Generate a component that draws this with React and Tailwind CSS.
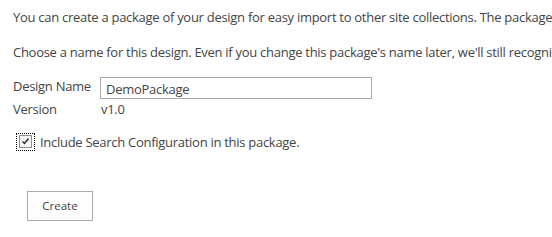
export default function App() {
  return (
    <div className="w-[552px] h-[237px] bg-white overflow-hidden text-[#444] text-[13px] leading-[18px] tracking-[-0.28px] whitespace-nowrap" style={{ fontFamily: '"Open Sans", "Noto Sans", sans-serif' }}>
      <div className="pl-[13px] pt-[8px]">
        <p>You can create a package of your design for easy import to other site collections. The package will be saved</p>
        <p className="mt-[17px]">Choose a name for this design. Even if you change this package's name later, we'll still recognize it as the same design.</p>
        <div className="mt-[16px] flex flex-col">
          <div className="flex items-start h-[22px]">
            <span className="w-[87px]">Design Name</span>
            <div className="w-[272px] h-[22px] border border-[#ababab] flex items-center pl-[5px] pt-[2px]">DemoPackage</div>
          </div>
          <div className="flex items-center h-[18px] mt-[1px]">
            <span className="w-[88px]">Version</span>
            <span>v1.0</span>
          </div>
        </div>
        <div className="mt-[14px] flex items-center">
          <div className="ml-[3px] w-[19px] h-[18px] border border-dotted border-black flex items-center justify-center">
            <div className="w-[13px] h-[13px] border border-[#8f8f8f] bg-[#f7f7f7] flex items-center justify-center">
              <svg width="9" height="9" viewBox="0 0 9 9"><path d="M1.5 4.5 L3.5 6.5 L7.5 1.5" fill="none" stroke="#222" strokeWidth="1.3" /></svg>
            </div>
          </div>
          <span className="ml-[5px] pt-[1px]">Include Search Configuration in this package.</span>
        </div>
        <div className="mt-[40px] pl-[14px]">
          <button className="w-[66px] h-[30px] border border-[#ababab] bg-[#fdfdfd] text-[11.5px] tracking-normal text-[#444]">Create</button>
        </div>
      </div>
    </div>
  );
}
